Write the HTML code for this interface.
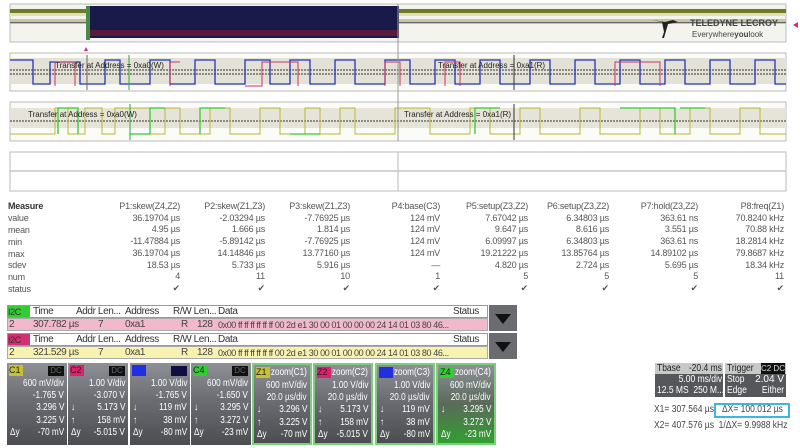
<!DOCTYPE html>
<html><head><meta charset="utf-8"><style>
*{margin:0;padding:0;box-sizing:border-box}
body{width:800px;height:448px;background:#fff;position:relative;overflow:hidden;font-family:"Liberation Sans",sans-serif;color:#444}
.a{position:absolute;white-space:nowrap}
.m{font-size:9px;color:#555;letter-spacing:-0.2px}
.r{text-align:right}
.hd{position:absolute;height:13px;background:#fff;border:1px solid #999;font-size:10px;color:#333}
.hd span,.dr span{position:absolute;top:0;line-height:12px;letter-spacing:-0.4px}
.dr{position:absolute;height:13px;font-size:10px;color:#444;border:1px solid #aaa}
.ch{position:absolute;top:363px;height:82px;width:60px;background:linear-gradient(#8e9096,#6b6d72 45%,#4b4d51);color:#fff;font-size:10px;overflow:hidden}
.ch div{position:absolute;right:3px;line-height:12px;transform:scaleX(.82);transform-origin:right}
.ch .l{left:3px;right:auto;transform-origin:left}
.tag{position:absolute;left:2px;top:2px;width:14px;height:11px;font-size:9px;line-height:11px;color:#222}
.dc{position:absolute;right:3px;top:3px;width:16px;height:10px;background:#111;font-size:8px;line-height:10px;text-align:center;color:#666}
.z{border:2px solid #7ccf7c}
.sx{transform:scaleX(.85);transform-origin:left}
</style></head><body>
<svg class="a" style="left:0;top:0" width="800" height="200">
<rect x="10" y="4" width="776" height="38" fill="#f4f4ee" stroke="#bbb"/>
<rect x="10" y="9" width="776" height="4" fill="#6d7a2a"/>
<rect x="10" y="13" width="776" height="3" fill="#e6e0b0"/>
<rect x="10" y="19" width="776" height="5" fill="#c8c4a0"/>
<rect x="10" y="22" width="776" height="1" fill="#666"/>
<rect x="88" y="6" width="311" height="32" fill="#1a1a4a"/>
<rect x="88" y="30" width="311" height="6" fill="#5a1a3a"/>
<rect x="86" y="6" width="4" height="34" fill="#4a8a4a"/>
<rect x="10" y="53" width="776" height="38" fill="#fbfbf7" stroke="#bbb"/>
<rect x="10" y="58" width="776" height="26" fill="#e4e2d6"/>
<line x1="10" y1="70" x2="786" y2="70" stroke="#333" stroke-dasharray="2,1"/>
<line x1="10" y1="74" x2="786" y2="74" stroke="#333" stroke-dasharray="2,1"/>
<path d="M10 60H33V84H50V62H80V84H105V60H120V84H150V60H170V84H195V60H215V84H245V60H270V84H290V60H310V84H335V60H355V84H385V60H410V84H435V60H455V84H480V60H500V84H530V60H550V84H575V60H595V84H620V60H640V84H665V60H685V84H710V60H730V84H755V60H775V84H786" fill="none" stroke="#2233bb" stroke-width="1.3"/>
<path d="M55 86V62H75V86M170 86V62H180M245 86H262V62H298V86M385 86V62H400V86M445 86V62H460V86M615 86V62H660V86" fill="none" stroke="#cc3366" stroke-width="1"/>
<rect x="10" y="102" width="776" height="39" fill="#fbfbf7" stroke="#bbb"/>
<rect x="10" y="108" width="776" height="20" fill="#e6e4d8"/>
<line x1="10" y1="121" x2="786" y2="121" stroke="#333" stroke-dasharray="2,1"/>
<path d="M10 134H55V108H68V134H85V108H102V134H115V108H150V134H165V108H180V134H210V108H230V134H260V108H280V134H305V108H320V134H340V108H355V134H395V108H430V134H470V108H490V134H520V108H540V134H580V108H600V134H640V108H660V134H690V108H710V134H740V108H760V134H786" fill="none" stroke="#b8b830" stroke-width="1"/>
<path d="M58 134V108H78V134M130 134H150V108H165M200 134V108H225M290 134H320M475 134V108H500M620 108H675V134M680 108H705" fill="none" stroke="#33cc33" stroke-width="1.3"/>
<rect x="10" y="152" width="776" height="39" fill="#fff" stroke="#bbb"/>
<line x1="10" y1="171" x2="786" y2="171" stroke="#aaa"/>
<line x1="398" y1="152" x2="398" y2="191" stroke="#bbb"/>
<line x1="398" y1="4" x2="398" y2="141" stroke="#999"/>
<line x1="514" y1="55" x2="514" y2="90" stroke="#333"/>
<line x1="514" y1="104" x2="514" y2="140" stroke="#333"/>
<line x1="87" y1="55" x2="87" y2="90" stroke="#666"/>
<line x1="129" y1="55" x2="129" y2="90" stroke="#3a3"/>
<line x1="130" y1="104" x2="130" y2="140" stroke="#3a3"/>
<text x="55" y="68" font-size="8" fill="#222">Transfer at Address = 0xa0(W)</text>
<text x="438" y="68" font-size="8" fill="#222">Transfer at Address = 0xa1(R)</text>
<text x="28" y="117" font-size="8" fill="#222">Transfer at Address = 0xa0(W)</text>
<text x="404" y="117" font-size="8" fill="#222">Transfer at Address = 0xa1(R)</text>
<polygon points="86,47 84,51 88,51" fill="#d03070"/>
<polygon points="798,22 793,25 798,28" fill="#d03070"/>
<path d="M652 20l10 2 2 10-2 6 2 0 4-14 10-2-5-2-8 2z" fill="#222"/>
<text x="690" y="26" font-size="9" font-weight="bold" fill="#444">TELEDYNE LECROY</text>
<text x="692" y="37" font-size="8" fill="#444">Everywhere<tspan font-weight="bold">you</tspan>look</text>
</svg>

<div class="a m" style="left:8px;top:201px;font-weight:bold;color:#333">Measure</div>
<div class="a m" style="left:8px;top:213px">value</div>
<div class="a m" style="left:8px;top:225px">mean</div>
<div class="a m" style="left:8px;top:237px">min</div>
<div class="a m" style="left:8px;top:249px">max</div>
<div class="a m" style="left:8px;top:260px">sdev</div>
<div class="a m" style="left:8px;top:272px">num</div>
<div class="a m" style="left:8px;top:284px">status</div>

<div class="a m r" style="right:620px;top:201px;line-height:11.7px">P1:skew(Z4,Z2)<br>36.19704 µs<br>4.95 µs<br>-11.47884 µs<br>36.19704 µs<br>18.53 µs<br>4<br>✔</div>
<div class="a m r" style="right:535px;top:201px;line-height:11.7px">P2:skew(Z1,Z3)<br>-2.03294 µs<br>1.666 µs<br>-5.89142 µs<br>14.14846 µs<br>5.733 µs<br>11<br>✔</div>
<div class="a m r" style="right:450px;top:201px;line-height:11.7px">P3:skew(Z1,Z3)<br>-7.76925 µs<br>1.814 µs<br>-7.76925 µs<br>13.77160 µs<br>5.916 µs<br>10<br>✔</div>
<div class="a m r" style="right:360px;top:201px;line-height:11.7px">P4:base(C3)<br>124 mV<br>124 mV<br>124 mV<br>124 mV<br>—<br>1<br>✔</div>
<div class="a m r" style="right:272px;top:201px;line-height:11.7px">P5:setup(Z3,Z2)<br>7.67042 µs<br>9.647 µs<br>6.09997 µs<br>19.21222 µs<br>4.820 µs<br>5<br>✔</div>
<div class="a m r" style="right:191px;top:201px;line-height:11.7px">P6:setup(Z3,Z2)<br>6.34803 µs<br>8.616 µs<br>6.34803 µs<br>13.85764 µs<br>2.724 µs<br>5<br>✔</div>
<div class="a m r" style="right:102px;top:201px;line-height:11.7px">P7:hold(Z3,Z2)<br>363.61 ns<br>3.551 µs<br>363.61 ns<br>14.89102 µs<br>5.695 µs<br>5<br>✔</div>
<div class="a m r" style="right:16px;top:201px;line-height:11.7px">P8:freq(Z1)<br>70.8240 kHz<br>70.88 kHz<br>18.2814 kHz<br>79.8687 kHz<br>18.34 kHz<br>11<br>✔</div>

<div class="hd" style="left:7px;top:305px;width:481px"><span style="left:0;width:22px;height:11px;background:#3c3;font-size:9px">I2C</span><span style="left:25px">Time</span><span style="left:68px">Addr Len...</span><span style="left:117px">Address</span><span style="left:165px">R/W Len...</span><span style="left:210px">Data</span><span style="left:445px">Status</span></div>
<div class="dr" style="left:7px;top:318px;width:481px;background:#f2b8cc"><span style="left:1px">2</span><span style="left:25px">307.782 µs</span><span style="left:90px">7</span><span style="left:117px">0xa1</span><span style="left:173px">R</span><span style="left:189px">128</span><span style="left:210px;font-size:9px;letter-spacing:-0.4px">0x00 ff ff ff ff ff ff 00 2d e1 30 00 01 00 00 00 24 14 01 03 80 46...</span></div>
<div class="hd" style="left:7px;top:333px;width:481px"><span style="left:0;width:22px;height:11px;background:#d03070;font-size:9px">I2C</span><span style="left:25px">Time</span><span style="left:68px">Addr Len...</span><span style="left:117px">Address</span><span style="left:165px">R/W Len...</span><span style="left:210px">Data</span><span style="left:445px">Status</span></div>
<div class="dr" style="left:7px;top:346px;width:481px;background:#f8f2b0"><span style="left:1px">2</span><span style="left:25px">321.529 µs</span><span style="left:90px">7</span><span style="left:117px">0xa1</span><span style="left:173px">R</span><span style="left:189px">128</span><span style="left:210px;font-size:9px;letter-spacing:-0.4px">0x00 ff ff ff ff ff ff 00 2d e1 30 00 01 00 00 00 24 14 01 03 80 46...</span></div>
<div class="a" style="left:489px;top:305px;width:28px;height:26px;background:#6a6c70"><svg width="28" height="26"><polygon points="6,9 22,9 14,19" fill="#111"/></svg></div>
<div class="a" style="left:489px;top:333px;width:28px;height:26px;background:#6a6c70"><svg width="28" height="26"><polygon points="6,9 22,9 14,19" fill="#111"/></svg></div>

<div class="ch" style="left:7px"><span class="tag" style="background:#c8c030">C1</span><span class="dc">DC</span><div style="top:15px">600 mV/div</div><div style="top:27px">-1.765 V</div><div style="top:39px">3.296 V</div><div style="top:52px">3.225 V</div><div style="top:64px">-70 mV</div><div class="l" style="top:64px">Δy</div></div>
<div class="ch" style="left:68px"><span class="tag" style="background:#e0206a">C2</span><span class="dc">DC</span><div style="top:15px">1.00 V/div</div><div style="top:27px">-3.070 V</div><div style="top:39px">5.173 V</div><div style="top:52px">158 mV</div><div style="top:64px">-5.015 V</div><div class="l" style="top:39px">↓</div><div class="l" style="top:52px">↑</div><div class="l" style="top:64px">Δy</div></div>
<div class="ch" style="left:130px"><span class="tag" style="background:#2030e0"></span><span class="dc" style="background:#101040"></span><div style="top:15px">1.00 V/div</div><div style="top:27px">-1.765 V</div><div style="top:39px">119 mV</div><div style="top:52px">38 mV</div><div style="top:64px">-80 mV</div><div class="l" style="top:39px">↓</div><div class="l" style="top:52px">↑</div><div class="l" style="top:64px">Δy</div></div>
<div class="ch" style="left:191px"><span class="tag" style="background:#30d030">C4</span><span class="dc">DC</span><div style="top:15px">600 mV/div</div><div style="top:27px">-1.650 V</div><div style="top:39px">3.295 V</div><div style="top:52px">3.272 V</div><div style="top:64px">-23 mV</div><div class="l" style="top:39px">↓</div><div class="l" style="top:52px">↑</div><div class="l" style="top:64px">Δy</div></div>
<div class="ch z" style="left:252px"><span class="tag" style="background:#c8c030">Z1</span><div style="top:2px">zoom(C1)</div><div style="top:15px">600 mV/div</div><div style="top:27px">20.0 µs/div</div><div style="top:39px">3.296 V</div><div style="top:52px">3.225 V</div><div style="top:64px">-70 mV</div><div class="l" style="top:39px">↓</div><div class="l" style="top:52px">↑</div><div class="l" style="top:64px">Δy</div></div>
<div class="ch z" style="left:313px"><span class="tag" style="background:#e0206a">Z2</span><div style="top:2px">zoom(C2)</div><div style="top:15px">1.00 V/div</div><div style="top:27px">20.0 µs/div</div><div style="top:39px">5.173 V</div><div style="top:52px">158 mV</div><div style="top:64px">-5.015 V</div><div class="l" style="top:39px">↓</div><div class="l" style="top:52px">↑</div><div class="l" style="top:64px">Δy</div></div>
<div class="ch z" style="left:375px"><span class="tag" style="background:#2030e0"></span><div style="top:2px">zoom(C3)</div><div style="top:15px">1.00 V/div</div><div style="top:27px">20.0 µs/div</div><div style="top:39px">119 mV</div><div style="top:52px">38 mV</div><div style="top:64px">-80 mV</div><div class="l" style="top:39px">↓</div><div class="l" style="top:52px">↑</div><div class="l" style="top:64px">Δy</div></div>
<div class="ch z" style="left:436px;background:linear-gradient(#8e9096,#5a6a5a 50%,#30a030)"><span class="tag" style="background:#30d030">Z4</span><div style="top:2px">zoom(C4)</div><div style="top:15px">600 mV/div</div><div style="top:27px">20.0 µs/div</div><div style="top:39px">3.295 V</div><div style="top:52px">3.272 V</div><div style="top:64px">-23 mV</div><div class="l" style="top:39px">↓</div><div class="l" style="top:64px">Δy</div></div>

<div class="a" style="left:655px;top:363px;width:68px;height:34px;background:#55575b;color:#fff;font-size:10px;overflow:hidden">
<div class="a" style="left:0;top:0;width:68px;height:11px;background:#c8c8c8;color:#222;line-height:11px"><span style="position:absolute;left:2px" class="sx">Tbase</span><span style="position:absolute;right:1px;transform:scaleX(.85);transform-origin:right">-20.4 ms</span></div>
<span class="a" style="right:1px;top:11px;transform:scaleX(.85);transform-origin:right">5.00 ms/div</span><span class="a sx" style="left:2px;top:22px">12.5 MS&nbsp; 250 M...</span></div>
<div class="a" style="left:725px;top:363px;width:61px;height:34px;background:#55575b;color:#fff;font-size:10px;overflow:hidden">
<div class="a" style="left:0;top:0;width:61px;height:11px;background:#c8c8c8;color:#222;line-height:11px"><span style="position:absolute;left:2px" class="sx">Trigger</span><span style="position:absolute;right:1px;background:#111;color:#ddd;font-size:8px">C2 DC</span></div>
<span class="a sx" style="left:2px;top:11px">Stop</span><span class="a" style="right:2px;top:11px">2.04 V</span><span class="a sx" style="left:2px;top:22px">Edge</span><span class="a" style="right:2px;top:22px;transform:scaleX(.85);transform-origin:right">Either</span></div>
<div class="a sx" style="left:654px;top:404px;font-size:10px;color:#444">X1= 307.564 µs</div>
<div class="a" style="left:714px;top:403px;width:76px;height:15px;border:2px solid #3ab8e0"></div>
<div class="a sx" style="left:722px;top:404px;font-size:10px;color:#444">ΔX= 100.012 µs</div>
<div class="a sx" style="left:654px;top:420px;font-size:10px;color:#444">X2= 407.576 µs&nbsp; 1/ΔX= 9.9988 kHz</div>
</body></html>
